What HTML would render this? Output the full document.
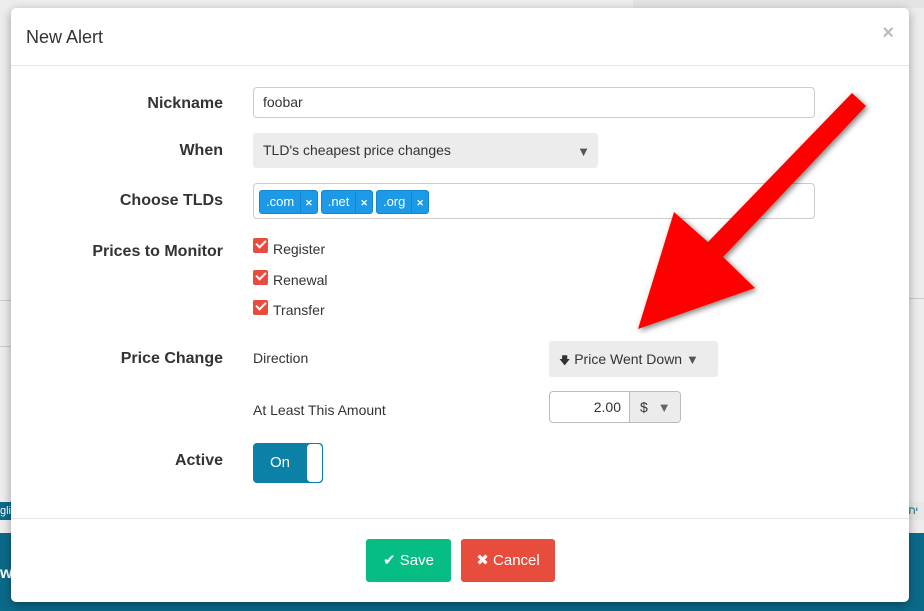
<!DOCTYPE html>
<html><head><style>
body{margin:0;width:924px;height:611px;overflow:hidden;background:#ececec;font-family:"Liberation Sans",sans-serif;position:relative}
.bg1{position:absolute;left:0;top:0;width:924px;height:611px;background:#ededed}
.band{position:absolute;left:0;top:533px;width:924px;height:78px;background:#0b6a8a}
.strip{position:absolute;left:0;top:502px;width:924px;height:18px;background:#e8e8e8}
.modal{position:absolute;left:11px;top:8px;width:898px;height:594px;background:#fff;border-radius:5px;box-shadow:0 3px 10px rgba(0,0,0,.35)}
.hdr{height:57px;border-bottom:1px solid #e5e5e5;position:relative}
.hdr h4{margin:0;position:absolute;left:15px;top:19px;font-weight:normal;font-size:18px;color:#333}
.x{position:absolute;right:15px;top:14px;font-size:20px;color:#bbb;font-weight:bold}
.lbl{position:absolute;font-weight:bold;font-size:16px;color:#333;text-align:right;width:212px;left:0}
.inp{position:absolute;border:1px solid #ccc;border-radius:4px;background:#fff;box-sizing:border-box}
.t{position:absolute;font-size:14px;color:#333}
.tag{display:inline-block;background:#1c9ae8;color:#fff;border:1px solid #1486cc;border-radius:3px;height:22px;line-height:22px;font-size:13px;margin-right:3px;vertical-align:top}
.tag span{padding:0 6px}
.tag b{display:inline-block;border-left:1px solid #1486cc;padding:0 4px;font-size:9px}
.cb{position:absolute;left:242px;width:15px;height:15px;background:#e74c3c;border-radius:2px}
.cb:after{content:"";position:absolute;left:3px;top:2px;width:8px;height:4px;border-left:2px solid #fff;border-bottom:2px solid #fff;transform:rotate(-45deg)}
.ft{position:absolute;left:0;top:510px;width:898px;border-top:1px solid #e5e5e5}
.btn{position:absolute;top:531px;height:43px;line-height:43px;color:#fff;font-size:15px;text-align:center;border-radius:3px}
</style></head><body>
<div class="bg1"></div>
<div style="position:absolute;left:633px;top:0;width:291px;height:8px;background:#e4e4e4"></div>
<div style="position:absolute;left:0;top:300px;width:12px;height:1px;background:#ccc"></div>
<div style="position:absolute;left:908px;top:298px;width:16px;height:1px;background:#ccc"></div>
<div style="position:absolute;left:0;top:346px;width:12px;height:1px;background:#ccc"></div>
<div class="strip"></div>
<div style="position:absolute;left:0;top:502px;width:12px;height:18px;background:#0b6a8a;color:#fff;font-size:11px;line-height:18px">gli</div>
<div style="position:absolute;left:908px;top:502px;width:16px;height:18px;color:#0b6a8a;font-size:11px;line-height:18px">ית</div>
<div class="band"></div>
<div style="position:absolute;left:0;top:565px;color:#fff;font-weight:bold;font-size:16px">w</div>
<div class="modal">
<div class="hdr"><h4>New Alert</h4><div class="x">×</div></div>
<div class="lbl" style="top:87px">Nickname</div>
<div class="inp" style="left:242px;top:79px;width:562px;height:31px;padding:6px 9px;font-size:14px;color:#333">foobar</div>
<div class="lbl" style="top:134px">When</div>
<div style="position:absolute;left:242px;top:125px;width:345px;height:35px;background:#ececec;border-radius:3px;font-size:14px;color:#333;line-height:35px;padding-left:10px;box-sizing:border-box">TLD's cheapest price changes<span style="position:absolute;right:8px;top:1px;font-size:13px;color:#555">▼</span></div>
<div class="lbl" style="top:184px">Choose TLDs</div>
<div class="inp" style="left:242px;top:175px;width:562px;height:36px;padding:6px 5px">
<span class="tag"><span>.com</span><b>✕</b></span><span class="tag"><span>.net</span><b>✕</b></span><span class="tag"><span>.org</span><b>✕</b></span></div>
<div class="lbl" style="top:235px">Prices to Monitor</div>
<div class="cb" style="top:230px"></div><div class="t" style="left:262px;top:233px">Register</div>
<div class="cb" style="top:262px"></div><div class="t" style="left:262px;top:264px">Renewal</div>
<div class="cb" style="top:292px"></div><div class="t" style="left:262px;top:294px">Transfer</div>
<div class="lbl" style="top:342px">Price Change</div>
<div class="t" style="left:242px;top:342px">Direction</div>
<div style="position:absolute;left:538px;top:333px;width:169px;height:36px;background:#ececec;border-radius:3px;font-size:14px;color:#333;line-height:36px;padding-left:10px;box-sizing:border-box"><span style="font-size:11px">🡇</span> Price Went Down <span style="font-size:13px;color:#555">▼</span></div>
<div class="t" style="left:242px;top:394px">At Least This Amount</div>
<div class="inp" style="left:538px;top:383px;width:132px;height:32px;overflow:hidden;border-color:#bbb">
<div style="position:absolute;left:0;top:0;width:71px;height:30px;line-height:30px;text-align:right;font-size:14px;color:#333">2.00</div>
<div style="position:absolute;left:79px;top:0;width:53px;height:30px;background:#ececec;border-left:1px solid #bbb;line-height:30px;font-size:14px;color:#333;padding-left:10px;box-sizing:border-box">$ <span style="font-size:13px;color:#666;margin-left:6px">▼</span></div></div>
<div class="lbl" style="top:444px">Active</div>
<div style="position:absolute;left:242px;top:435px;width:70px;height:40px;background:#0b81a8;border-radius:4px;box-sizing:border-box;border:1px solid #0b81a8">
<div style="position:absolute;left:0;width:52px;line-height:38px;text-align:center;color:#fff;font-size:15px">On</div>
<div style="position:absolute;right:0;top:0;width:15px;height:38px;background:#fff;border-radius:4px"></div></div>
<div class="ft"></div>
<div class="btn" style="left:355px;width:85px;background:#06bd84">✔ Save</div>
<div class="btn" style="left:450px;width:94px;background:#e84c3d">✖ Cancel</div>
</div>
<svg width="924" height="611" style="position:absolute;left:0;top:0">
<defs><filter id="s" x="-20%" y="-20%" width="140%" height="140%"><feDropShadow dx="2" dy="2" stdDeviation="3" flood-color="#000" flood-opacity=".5"/></filter></defs>
<polygon filter="url(#s)" fill="#f00" points="852,93 866,106 723,257 755,288 638,329 674,212 708,242"/>
</svg>
</body></html>
